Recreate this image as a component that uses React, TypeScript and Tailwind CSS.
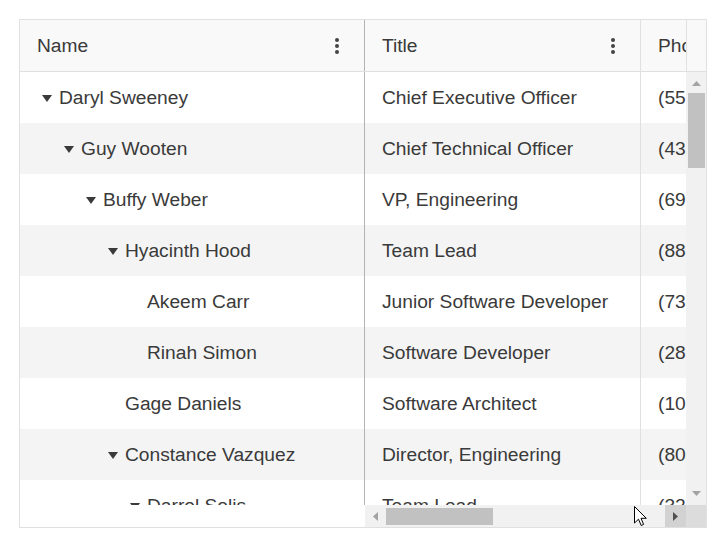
import React from "react";

type Row = { name: string; level: number; expanded?: boolean; title: string; phone: string };

const rows: Row[] = [
  { name: "Daryl Sweeney", level: 0, expanded: true, title: "Chief Executive Officer", phone: "(555) 924-9726" },
  { name: "Guy Wooten", level: 1, expanded: true, title: "Chief Technical Officer", phone: "(438) 738-4935" },
  { name: "Buffy Weber", level: 2, expanded: true, title: "VP, Engineering", phone: "(699) 838-6121" },
  { name: "Hyacinth Hood", level: 3, expanded: true, title: "Team Lead", phone: "(889) 345-2438" },
  { name: "Akeem Carr", level: 4, title: "Junior Software Developer", phone: "(738) 136-2814" },
  { name: "Rinah Simon", level: 4, title: "Software Developer", phone: "(285) 912-5271" },
  { name: "Gage Daniels", level: 3, title: "Software Architect", phone: "(107) 290-6260" },
  { name: "Constance Vazquez", level: 3, expanded: true, title: "Director, Engineering", phone: "(800) 301-1978" },
  { name: "Darrel Solis", level: 4, expanded: true, title: "Team Lead", phone: "(327) 977-0216" },
];

function Kebab() {
  return (
    <svg width="6" height="18" viewBox="0 0 6 18" className="block">
      <circle cx="3" cy="3" r="2" fill="#444" />
      <circle cx="3" cy="9" r="2" fill="#444" />
      <circle cx="3" cy="15" r="2" fill="#444" />
    </svg>
  );
}

function Caret() {
  return (
    <svg width="10" height="7" viewBox="0 0 10 7" className="block">
      <polygon points="0,0 10,0 5,7" fill="#3a3a3a" />
    </svg>
  );
}

function Tri({ dir }: { dir: "up" | "down" | "left" | "right" }) {
  const pts =
    dir === "up" ? "0,5 9,5 4.5,0" : dir === "down" ? "0,0 9,0 4.5,5" : dir === "left" ? "5,0 5,9 0,4.5" : "0,0 0,9 5,4.5";
  const w = dir === "up" || dir === "down" ? 9 : 5;
  const h = dir === "up" || dir === "down" ? 5 : 9;
  return (
    <svg width={w} height={h} viewBox={`0 0 ${w} ${h}`} className="block">
      <polygon points={pts} fill={dir === "right" ? "#505050" : "#a3a3a3"} />
    </svg>
  );
}

export default function App() {
  return (
    <div
      className="w-[724px] h-[539px] bg-white relative overflow-hidden"
      style={{ fontFamily: "'Liberation Sans', Arial, sans-serif" }}
    >
      <div className="absolute left-[19px] top-[19px] w-[688px] h-[509px] border border-[#e0e0e0] flex flex-col text-[19.2px] text-[#3a3a3a]">
        {/* header */}
        <div className="flex h-[52px] shrink-0 border-b border-[#e0e0e0] bg-[#f9f9f9]">
          <div className="w-[345px] shrink-0 border-r border-[#b3b3b3] flex items-center pl-[17px] pr-[24px] justify-between">
            <span className="pt-[1px]">Name</span>
            <Kebab />
          </div>
          <div className="w-[276px] shrink-0 border-r border-[#e0e0e0] flex items-center pl-[17px] pr-[24px] justify-between">
            <span className="pt-[1px]">Title</span>
            <Kebab />
          </div>
          <div className="w-[46px] shrink-0 border-r border-[#e0e0e0] flex items-center pl-[17px] overflow-hidden whitespace-nowrap">
            <span className="pt-[1px]">Phone</span>
          </div>
          <div className="flex-1" />
        </div>
        {/* body */}
        <div className="flex flex-1 min-h-0">
          {/* pinned */}
          <div className="w-[345px] shrink-0 flex flex-col">
            <div className="h-[433px] overflow-hidden border-r border-[#b3b3b3]">
              {rows.map((r, i) => (
                <div
                  key={r.name}
                  className={`h-[51px] flex items-center pl-[17px] whitespace-nowrap ${i % 2 === 1 ? "bg-[#f4f4f4]" : "bg-white"}`}
                >
                  <div style={{ width: r.level * 22 }} className="shrink-0" />
                  <div className="w-[22px] shrink-0 flex items-center pl-[5px] pt-[2px]">{r.expanded ? <Caret /> : null}</div>
                  <span className="pt-[1px]">{r.name}</span>
                </div>
              ))}
            </div>
            <div className="flex-1 bg-white" />
          </div>
          {/* scrollable */}
          <div className="flex-1 flex flex-col min-w-0">
            <div className="flex h-[433px]">
              <div className="flex-1 overflow-hidden">
                {rows.map((r, i) => (
                  <div key={r.name} className={`h-[51px] flex whitespace-nowrap ${i % 2 === 1 ? "bg-[#f4f4f4]" : "bg-white"}`}>
                    <div className="w-[276px] shrink-0 border-r border-[#e0e0e0] flex items-center pl-[17px] pt-[1px]">{r.title}</div>
                    <div className="w-[120px] shrink-0 flex items-center pl-[17px] pt-[1px]">{r.phone}</div>
                  </div>
                ))}
              </div>
              <div className="w-[20px] shrink-0 bg-[#f1f1f1] flex flex-col items-center">
                <div className="h-[21px] flex items-center justify-center pt-[1px]">
                  <Tri dir="up" />
                </div>
                <div className="w-[17px] h-[75px] bg-[#c1c1c1]" />
                <div className="flex-1" />
                <div className="h-[21px] flex items-center justify-center pb-[3px]">
                  <Tri dir="down" />
                </div>
              </div>
            </div>
            <div className="flex flex-1">
              <div className="flex-1 bg-[#f1f1f1] flex items-center">
                <div className="w-[21px] h-full flex items-center justify-center">
                  <Tri dir="left" />
                </div>
                <div className="w-[107px] h-[17px] bg-[#c1c1c1]" />
                <div className="flex-1" />
                <div className="w-[21px] h-full bg-[#d2d2d2] flex items-center justify-center">
                  <Tri dir="right" />
                </div>
              </div>
              <div className="w-[20px] shrink-0 bg-[#dcdcdc]" />
            </div>
          </div>
        </div>
      </div>
      {/* mouse cursor */}
      <svg className="absolute left-[634px] top-[506px]" width="13" height="21" viewBox="0 0 13 21">
        <path d="M0.5,0.5 L0.5,17 L4.5,13.2 L7.2,19.5 L9.6,18.4 L7,12.3 L12.3,12.3 Z" fill="#fff" stroke="#000" strokeWidth="1" strokeLinejoin="round" />
      </svg>
    </div>
  );
}
